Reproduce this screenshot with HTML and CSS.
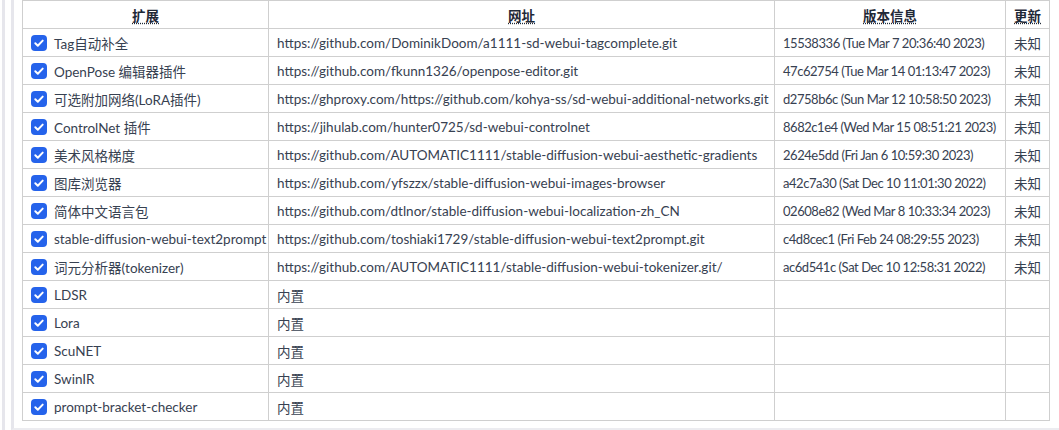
FILE: index.html
```html
<!DOCTYPE html>
<html>
<head>
<meta charset="utf-8">
<link rel="stylesheet" href="styles.css">
</head>
<body>
<div class="frame">
  <div class="panel">
    <table class="ext-table">
      <colgroup>
        <col class="c1"><col class="c2"><col class="c3"><col class="c4">
      </colgroup>
      <thead>
        <tr>
          <th><abbr>扩展</abbr></th>
          <th><abbr>网址</abbr></th>
          <th><abbr>版本信息</abbr></th>
          <th><abbr>更新</abbr></th>
        </tr>
      </thead>
      <tbody>
        <tr><td><label class="ext"><span class="cb"><svg viewBox="0 0 16 16" width="16" height="16"><path d="M4.3 8.3 L6.8 10.7 L11.7 5.6" fill="none" stroke="#fff" stroke-width="2" stroke-linecap="round" stroke-linejoin="round"/></svg></span>Tag自动补全</label></td><td>https://github.com/DominikDoom/a1111-sd-webui-tagcomplete.git</td><td class="ver">15538336 (Tue Mar 7 20:36:40 2023)</td><td>未知</td></tr>
        <tr><td><label class="ext"><span class="cb"><svg viewBox="0 0 16 16" width="16" height="16"><path d="M4.3 8.3 L6.8 10.7 L11.7 5.6" fill="none" stroke="#fff" stroke-width="2" stroke-linecap="round" stroke-linejoin="round"/></svg></span>OpenPose 编辑器插件</label></td><td>https://github.com/fkunn1326/openpose-editor.git</td><td class="ver">47c62754 (Tue Mar 14 01:13:47 2023)</td><td>未知</td></tr>
        <tr><td><label class="ext"><span class="cb"><svg viewBox="0 0 16 16" width="16" height="16"><path d="M4.3 8.3 L6.8 10.7 L11.7 5.6" fill="none" stroke="#fff" stroke-width="2" stroke-linecap="round" stroke-linejoin="round"/></svg></span>可选附加网络(LoRA插件)</label></td><td>https://ghproxy.com/https://github.com/kohya-ss/sd-webui-additional-networks.git</td><td class="ver">d2758b6c (Sun Mar 12 10:58:50 2023)</td><td>未知</td></tr>
        <tr><td><label class="ext"><span class="cb"><svg viewBox="0 0 16 16" width="16" height="16"><path d="M4.3 8.3 L6.8 10.7 L11.7 5.6" fill="none" stroke="#fff" stroke-width="2" stroke-linecap="round" stroke-linejoin="round"/></svg></span>ControlNet 插件</label></td><td>https://jihulab.com/hunter0725/sd-webui-controlnet</td><td class="ver">8682c1e4 (Wed Mar 15 08:51:21 2023)</td><td>未知</td></tr>
        <tr><td><label class="ext"><span class="cb"><svg viewBox="0 0 16 16" width="16" height="16"><path d="M4.3 8.3 L6.8 10.7 L11.7 5.6" fill="none" stroke="#fff" stroke-width="2" stroke-linecap="round" stroke-linejoin="round"/></svg></span>美术风格梯度</label></td><td>https://github.com/AUTOMATIC1111/stable-diffusion-webui-aesthetic-gradients</td><td class="ver">2624e5dd (Fri Jan 6 10:59:30 2023)</td><td>未知</td></tr>
        <tr><td><label class="ext"><span class="cb"><svg viewBox="0 0 16 16" width="16" height="16"><path d="M4.3 8.3 L6.8 10.7 L11.7 5.6" fill="none" stroke="#fff" stroke-width="2" stroke-linecap="round" stroke-linejoin="round"/></svg></span>图库浏览器</label></td><td>https://github.com/yfszzx/stable-diffusion-webui-images-browser</td><td class="ver">a42c7a30 (Sat Dec 10 11:01:30 2022)</td><td>未知</td></tr>
        <tr><td><label class="ext"><span class="cb"><svg viewBox="0 0 16 16" width="16" height="16"><path d="M4.3 8.3 L6.8 10.7 L11.7 5.6" fill="none" stroke="#fff" stroke-width="2" stroke-linecap="round" stroke-linejoin="round"/></svg></span>简体中文语言包</label></td><td>https://github.com/dtlnor/stable-diffusion-webui-localization-zh_CN</td><td class="ver">02608e82 (Wed Mar 8 10:33:34 2023)</td><td>未知</td></tr>
        <tr><td><label class="ext"><span class="cb"><svg viewBox="0 0 16 16" width="16" height="16"><path d="M4.3 8.3 L6.8 10.7 L11.7 5.6" fill="none" stroke="#fff" stroke-width="2" stroke-linecap="round" stroke-linejoin="round"/></svg></span>stable-diffusion-webui-text2prompt</label></td><td>https://github.com/toshiaki1729/stable-diffusion-webui-text2prompt.git</td><td class="ver">c4d8cec1 (Fri Feb 24 08:29:55 2023)</td><td>未知</td></tr>
        <tr><td><label class="ext"><span class="cb"><svg viewBox="0 0 16 16" width="16" height="16"><path d="M4.3 8.3 L6.8 10.7 L11.7 5.6" fill="none" stroke="#fff" stroke-width="2" stroke-linecap="round" stroke-linejoin="round"/></svg></span>词元分析器(tokenizer)</label></td><td>https://github.com/AUTOMATIC1111/stable-diffusion-webui-tokenizer.git/</td><td class="ver">ac6d541c (Sat Dec 10 12:58:31 2022)</td><td>未知</td></tr>
        <tr><td><label class="ext"><span class="cb"><svg viewBox="0 0 16 16" width="16" height="16"><path d="M4.3 8.3 L6.8 10.7 L11.7 5.6" fill="none" stroke="#fff" stroke-width="2" stroke-linecap="round" stroke-linejoin="round"/></svg></span>LDSR</label></td><td>内置</td><td></td><td></td></tr>
        <tr><td><label class="ext"><span class="cb"><svg viewBox="0 0 16 16" width="16" height="16"><path d="M4.3 8.3 L6.8 10.7 L11.7 5.6" fill="none" stroke="#fff" stroke-width="2" stroke-linecap="round" stroke-linejoin="round"/></svg></span>Lora</label></td><td>内置</td><td></td><td></td></tr>
        <tr><td><label class="ext"><span class="cb"><svg viewBox="0 0 16 16" width="16" height="16"><path d="M4.3 8.3 L6.8 10.7 L11.7 5.6" fill="none" stroke="#fff" stroke-width="2" stroke-linecap="round" stroke-linejoin="round"/></svg></span>ScuNET</label></td><td>内置</td><td></td><td></td></tr>
        <tr><td><label class="ext"><span class="cb"><svg viewBox="0 0 16 16" width="16" height="16"><path d="M4.3 8.3 L6.8 10.7 L11.7 5.6" fill="none" stroke="#fff" stroke-width="2" stroke-linecap="round" stroke-linejoin="round"/></svg></span>SwinIR</label></td><td>内置</td><td></td><td></td></tr>
        <tr><td><label class="ext"><span class="cb"><svg viewBox="0 0 16 16" width="16" height="16"><path d="M4.3 8.3 L6.8 10.7 L11.7 5.6" fill="none" stroke="#fff" stroke-width="2" stroke-linecap="round" stroke-linejoin="round"/></svg></span>prompt-bracket-checker</label></td><td>内置</td><td></td><td></td></tr>
      </tbody>
    </table>
  </div>
</div>
</body>
</html>
```

FILE: styles.css
```css
html, body {
  margin: 0;
  padding: 0;
  background: #ffffff;
}
body {
  font-family: "Lato", "Noto Sans CJK SC", sans-serif;
  font-size: 13.5px;
  color: #374151;
  height: 430px;
  overflow: hidden;
}
.frame {
  margin-left: 2px;
  border-left: 3px solid #e6e6ec;
  padding-left: 6px;
  height: 430px;
  box-sizing: border-box;
}
.panel {
  border-left: 3px solid #e6e6ec;
  border-bottom: 2px solid #ececf0;
  padding-left: 8px;
  height: 430px;
  box-sizing: border-box;
}
.ext-table {
  border-collapse: collapse;
  table-layout: fixed;
  width: 1027px;
}
.c1 { width: 246px; }
.c2 { width: 506px; }
.c3 { width: 231px; }
.c4 { width: 44px; }
.ext-table th,
.ext-table td {
  border: 1px solid #cfcfcf;
  height: 28px;
  padding: 0 8px;
  white-space: nowrap;
  overflow: hidden;
  box-sizing: border-box;
  vertical-align: middle;
}
.ext-table th {
  font-weight: 700;
  color: #1f2937;
  text-align: center;
}
.ext-table th abbr {
  text-decoration: underline dotted;
  text-underline-offset: 2px;
}
.ext-table td {
  text-align: left;
}
.ext-table td.ver {
  font-size: 13px;
  letter-spacing: -0.45px;
}
.ext {
  display: flex;
  align-items: center;
  gap: 7px;
}
.cb {
  width: 16px;
  height: 16px;
  border-radius: 4px;
  background: #2563eb;
  display: inline-flex;
  flex: none;
}
```
